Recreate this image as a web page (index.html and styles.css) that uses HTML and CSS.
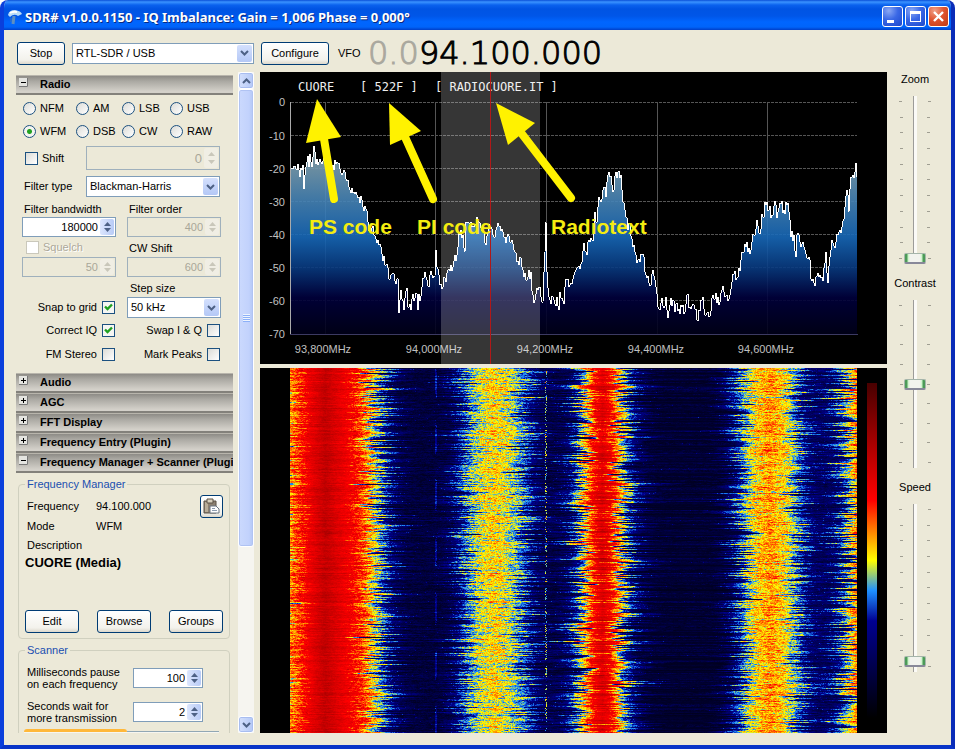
FILE: index.html
```html
<!DOCTYPE html>
<html lang="en">
<head>
<meta charset="utf-8">
<title>SDR# v1.0.0.1150</title>
<link rel="stylesheet" href="styles.css">
</head>
<body>
<svg class="defs" aria-hidden="true">
  <symbol id="chev-down" viewBox="0 0 9 6"><path d="M1 1 L4.500 4.500 L8 1" fill="none" stroke="#4d6185" stroke-width="2"/></symbol>
  <symbol id="chev-up" viewBox="0 0 9 6"><path d="M1 5 L4.500 1.500 L8 5" fill="none" stroke="#4d6185" stroke-width="2"/></symbol>
  <symbol id="tri-up" viewBox="0 0 7 4"><path d="M0 4 L3.500 0 L7 4Z" fill="currentColor"/></symbol>
  <symbol id="tri-down" viewBox="0 0 7 4"><path d="M0 0 L3.500 4 L7 0Z" fill="currentColor"/></symbol>
  <symbol id="minus" viewBox="0 0 9 9"><path d="M0 0H9V9H0Z" fill="#e4e4e0"/><path d="M0 8.500H8.500V0" fill="none" stroke="#777"/><path d="M2 4.500H7" stroke="#000"/></symbol>
  <symbol id="plus" viewBox="0 0 9 9"><path d="M0 0H9V9H0Z" fill="#e4e4e0"/><path d="M0 8.500H8.500V0" fill="none" stroke="#777"/><path d="M2 4.500H7M4.500 2V7" stroke="#000"/></symbol>
</svg>
<div class="window">
  <header class="titlebar">
    <svg class="app-icon" viewBox="0 0 16 18"><path d="M1 7 Q2 2 8 2 Q14 3 15 6 L11 8 Q7 5 3 9Z" fill="#b9dcf7"/><path d="M3 5 Q6 3 10 4" stroke="#fff" stroke-width="2" fill="none"/><path d="M7 8 L6 16" stroke="#5f8fc0" stroke-width="3"/><path d="M4 10 L4 14" stroke="#3c74b4" stroke-width="1"/></svg>
    <h1>SDR# v1.0.0.1150 - IQ Imbalance: Gain = 1,006 Phase = 0,000°</h1>
    <button class="cap" aria-label="Minimize"><svg viewBox="0 0 19 19"><path d="M4 13H11V16H4Z" fill="#fff"/></svg></button>
    <button class="cap" aria-label="Maximize"><svg viewBox="0 0 19 19"><path d="M4 4H15V15H4Z M5 7V14H14V7Z" fill="#fff" fill-rule="evenodd"/></svg></button>
    <button class="cap close" aria-label="Close"><svg viewBox="0 0 19 19"><path d="M5 5L14 14M14 5L5 14" stroke="#fff" stroke-width="2.400"/></svg></button>
  </header>
  <div class="toolbar">
    <button class="btn stop">Stop</button>
    <span class="combo source"><select aria-label="Source"><option>RTL-SDR / USB</option></select><span class="drop"><svg><use href="#chev-down"/></svg></span></span>
    <button class="btn configure">Configure</button>
    <span class="vfo-label">VFO</span>
    <output class="vfo"><span>0.0</span>94.100.000</output>
  </div>
  <main class="content">
    <aside class="sidebar">
      <div class="panels">
        <h2 class="bar"><svg><use href="#minus"/></svg>Radio</h2>
        <div class="radio-panel">
          <div class="modes">
            <label><input type="radio" name="mode">NFM</label>
            <label><input type="radio" name="mode">AM</label>
            <label><input type="radio" name="mode">LSB</label>
            <label><input type="radio" name="mode">USB</label>
            <label><input type="radio" name="mode" checked>WFM</label>
            <label><input type="radio" name="mode">DSB</label>
            <label><input type="radio" name="mode">CW</label>
            <label><input type="radio" name="mode">RAW</label>
          </div>
          <div class="wide-row">
            <label class="check"><input type="checkbox">Shift</label>
            <span class="spin off tall"><input type="text" value="0" disabled aria-label="Shift amount"><span class="arrows"><svg><use href="#tri-up"/></svg><svg><use href="#tri-down"/></svg></span></span>
          </div>
          <div class="wide-row">
            <label for="ftype">Filter type</label>
            <span class="combo"><select id="ftype"><option>Blackman-Harris</option></select><span class="drop"><svg><use href="#chev-down"/></svg></span></span>
          </div>
          <div class="pair">
            <label class="cap-label" for="fbw">Filter bandwidth</label>
            <label class="cap-label" for="ford">Filter order</label>
            <span class="spin"><input id="fbw" type="text" value="180000"><span class="arrows"><svg><use href="#tri-up"/></svg><svg><use href="#tri-down"/></svg></span></span>
            <span class="spin off"><input id="ford" type="text" value="400" disabled><span class="arrows"><svg><use href="#tri-up"/></svg><svg><use href="#tri-down"/></svg></span></span>
            <label class="check squelch"><input type="checkbox" disabled>Squelch</label>
            <label class="cap-label cw" for="cws">CW Shift</label>
            <span class="spin off"><input type="text" value="50" disabled aria-label="Squelch level"><span class="arrows"><svg><use href="#tri-up"/></svg><svg><use href="#tri-down"/></svg></span></span>
            <span class="spin off"><input id="cws" type="text" value="600" disabled><span class="arrows"><svg><use href="#tri-up"/></svg><svg><use href="#tri-down"/></svg></span></span>
            <span></span>
            <label class="cap-label step" for="step">Step size</label>
            <label class="check end">Snap to grid<input type="checkbox" checked></label>
            <span class="combo"><select id="step"><option>50 kHz</option></select><span class="drop"><svg><use href="#chev-down"/></svg></span></span>
            <label class="check end line">Correct IQ<input type="checkbox" checked></label>
            <label class="check end line">Swap I &amp; Q<input type="checkbox"></label>
            <label class="check end line">FM Stereo<input type="checkbox"></label>
            <label class="check end line">Mark Peaks<input type="checkbox"></label>
          </div>
        </div>
        <h2 class="bar"><svg><use href="#plus"/></svg>Audio</h2>
        <h2 class="bar"><svg><use href="#plus"/></svg>AGC</h2>
        <h2 class="bar"><svg><use href="#plus"/></svg>FFT Display</h2>
        <h2 class="bar"><svg><use href="#plus"/></svg>Frequency Entry (Plugin)</h2>
        <h2 class="bar"><svg><use href="#minus"/></svg>Frequency Manager + Scanner (Plugin)</h2>
        <fieldset class="group manager">
          <legend>Frequency Manager</legend>
          <dl><dt>Frequency</dt><dd>94.100.000</dd><dt>Mode</dt><dd>WFM</dd><dt>Description</dt></dl>
          <button class="btn paste" aria-label="Paste frequency"><svg viewBox="0 0 17 17"><path d="M1 3H13V15H1Z" fill="#8c8070" stroke="#5d5347"/><path d="M2 4H5V14H2Z" fill="#b9ad98"/><path d="M4 1H10V5H4Z" fill="#d8d0bd" stroke="#5d5347"/><path d="M7 8H13L16 11V15H7Z" fill="#fff" stroke="#6b7480"/><path d="M9 10.500H12M9 12.500H14" stroke="#8d9cb0"/></svg></button>
          <p class="station">CUORE (Media)</p>
          <div class="actions"><button class="btn">Edit</button><button class="btn">Browse</button><button class="btn">Groups</button></div>
        </fieldset>
        <fieldset class="group scanner">
          <legend>Scanner</legend>
          <div class="scan-row"><label for="ms">Milliseconds pause<br>on each frequency</label><span class="spin"><input id="ms" type="text" value="100"><span class="arrows"><svg><use href="#tri-up"/></svg><svg><use href="#tri-down"/></svg></span></span></div>
          <div class="scan-row"><label for="sec">Seconds wait for<br>more transmission</label><span class="spin"><input id="sec" type="text" value="2"><span class="arrows"><svg><use href="#tri-up"/></svg><svg><use href="#tri-down"/></svg></span></span></div>
          <div class="scan-tabs"><button class="hot" aria-label="Scan"></button><button aria-label="Results"></button></div>
        </fieldset>
      </div>
      <div class="scrollbar">
        <button aria-label="Scroll up"><svg><use href="#chev-up"/></svg></button>
        <div class="rail"><div class="thumb"><i></i></div></div>
        <button aria-label="Scroll down"><svg><use href="#chev-down"/></svg></button>
      </div>
    </aside>
    <section class="plots">
      <svg class="spectrum" viewBox="0 0 627 292">
        <defs>
          <linearGradient id="fill" gradientUnits="userSpaceOnUse" x1="0" y1="80" x2="0" y2="262">
            <stop offset="0" stop-color="#8fa9b0"/><stop offset=".25" stop-color="#4a86b6"/><stop offset=".47" stop-color="#1768b8"/><stop offset=".64" stop-color="#08397f"/><stop offset=".8" stop-color="#00003c"/><stop offset="1" stop-color="#000018"/>
          </linearGradient>
        </defs>
        <path class="grid dashed" d="M31 30.500H597M31 63.500H597M31 96.500H597M31 129.500H597M31 162.500H597M31 195.500H597M31 228.500H597"/>
        <path class="grid" d="M65.500 30V262M175.500 30V262M286.500 30V262M397.500 30V262M507.500 30V262"/>
        <path id="area" fill="url(#fill)" fill-opacity=".9"/>
        <path id="trace"/>
        <path class="axis" d="M30.500 30V262.500"/><path class="base" d="M30 262.500H598"/>
        <g class="db"><text x="25" y="34">0</text><text x="25" y="68">-10</text><text x="25" y="101">-20</text><text x="25" y="134">-30</text><text x="25" y="167">-40</text><text x="25" y="200">-50</text><text x="25" y="233">-60</text><text x="25" y="266">-70</text></g>
        <g class="mhz"><text x="63" y="281">93,800MHz</text><text x="174" y="281">94,000MHz</text><text x="285" y="281">94,200MHz</text><text x="396" y="281">94,400MHz</text><text x="506" y="281">94,600MHz</text></g>
        <g class="rds"><text x="38" y="19">CUORE</text><text x="100" y="19">[ 522F ]</text><text x="175" y="19">[ RADIOCUORE.IT ]</text></g>
        <rect x="181" y="0" width="99" height="292" fill="#fff" fill-opacity=".21"/>
        <path d="M230.500 0V292" stroke="#b01818"/>
        <g class="notes"><text x="49" y="162">PS code</text><text x="157" y="162">PI code</text><text x="291" y="162">Radiotext</text></g>
        <g class="arrows-y"><path d="M57 27L46 71L81 65Z"/><path d="M64 67L74 127"/><path d="M129 31L130 73L161 59Z"/><path d="M145 65L173 127"/><path d="M236 31L248 73L275 51Z"/><path d="M262 62L311 126"/></g>
      </svg>
      <div class="waterfall"><canvas id="fall" width="567" height="365"></canvas><div class="legend"></div></div>
    </section>
    <section class="sliders">
      <div class="slider"><label for="zoom">Zoom</label><div class="track"><span class="ticks"><i></i><i></i><i></i><i></i><i></i><i></i><i></i><i></i><i></i><i></i><i></i></span><input id="zoom" type="range" min="0" max="100" value="0"></div></div>
      <div class="slider"><label for="contrast">Contrast</label><div class="track"><span class="ticks"><i></i><i></i><i></i><i></i><i></i><i></i><i></i><i></i><i></i></span><input id="contrast" type="range" min="0" max="100" value="50"></div></div>
      <div class="slider"><label for="speed">Speed</label><div class="track"><span class="ticks"><i></i><i></i><i></i><i></i><i></i><i></i><i></i><i></i><i></i><i></i><i></i></span><input id="speed" type="range" min="0" max="100" value="3"></div></div>
    </section>
  </main>
</div>
<script src="plots.js"></script>
</body>
</html>
```
FILE: styles.css
```css
* { box-sizing: border-box; }
body { margin: 0; background: #fff; font: 11px/13px "Liberation Sans", Arial, sans-serif; color: #000; }
button, input, select { font: inherit; color: inherit; margin: 0; padding: 0; }
.defs { position: absolute; width: 0; height: 0; }
.window { display: flex; flex-direction: column; height: 100vh; background: #ece9d8; border: solid #0046e0; border-width: 0 4px 4px; border-radius: 8px 8px 0 0; overflow: hidden; border-left-color: #0a3fdc; border-right-color: #0a2cb8; border-bottom-color: #0834c8; }

.titlebar { display: flex; align-items: center; gap: 2px; height: 30px; flex: none; margin: 0 -4px; padding: 3px 6px 0 7px; background: linear-gradient(#0a50d8 0, #3a93ff 2px, #0a62ee 5px, #0054e3 9px, #0056e8 16px, #0066ff 22px, #0064fa 27px, #003fc8 30px); }
.app-icon { width: 16px; height: 18px; }
.titlebar h1 { flex: 1; margin: 0; font: bold 13px/18px "Noto Sans", sans-serif; color: #fff; text-shadow: 1px 1px #0a2a80; white-space: nowrap; }
.cap { width: 21px; height: 21px; border: 1px solid #fff; border-radius: 3px; background: radial-gradient(circle at 30% 20%, #8aa8f4, #3a68e6 45%, #1c48cc); }
.cap svg { display: block; width: 19px; height: 19px; }
.cap.close { background: radial-gradient(circle at 30% 20%, #f0a088, #e05530 45%, #c03a14); }

.toolbar { display: flex; align-items: center; height: 42px; flex: none; padding: 4px 12px 0 13px; }
.btn { height: 23px; border: 1px solid #003c74; border-radius: 3px; background: linear-gradient(#fff, #f3f2ec 80%, #dcd8cc); text-align: center; }
.stop { width: 48px; margin-right: 7px; }
.configure { width: 68px; margin: 0 9px 0 7px; }
.vfo-label { width: 30px; }
.vfo { font: 200 32px/34px "DejaVu Sans", sans-serif; -webkit-text-stroke: 1px currentColor; }
.vfo span { color: #aaa89e; }

.combo { display: flex; height: 21px; border: 1px solid #7f9db9; background: #fff; }
.combo select { flex: 1; min-width: 0; appearance: none; border: 0; background: none; padding-left: 3px; outline: 0; }
.source { width: 182px; }
.drop { display: grid; place-items: center; width: 15px; margin: 1px; border-radius: 2px; background: linear-gradient(#d4e0fd, #b4c8f6); pointer-events: none; }
.drop svg, .scrollbar svg { width: 9px; height: 6px; display: block; }

.content { display: flex; flex: 1; min-height: 0; padding: 0 8px 12px 12px; }
.sidebar { display: flex; width: 238px; margin-right: 6px; flex: none; }
.panels { flex: 1; min-width: 0; overflow: hidden; padding: 3px 5px 0 0; }
.bar { display: flex; gap: 12px; height: 20px; margin: 0; padding: 0 0 0 3px; font: bold 11px/17px "Liberation Sans", Arial, sans-serif; white-space: nowrap; overflow: hidden; background: linear-gradient(#8d8b86, #aaa8a2 30%, #d3d0c9 90%); border-top: 1px solid #b8b5ac; border-bottom: 2px solid #83817b; }
.bar svg { width: 9px; height: 9px; margin-top: 2px; flex: none; }

.radio-panel { padding: 2px 12px 7px 6px; }
.modes { display: grid; grid-template-columns: 53px 46px 48px 1fr; grid-auto-rows: 23px; padding-left: 1px; }
.modes label, .check { display: flex; align-items: center; gap: 4px; white-space: nowrap; }
input[type=radio], input[type=checkbox] { appearance: none; flex: none; width: 13px; height: 13px; border: 1px solid #1c5180; background: linear-gradient(135deg, #dcdcd7, #fff); }
input[type=radio] { border-radius: 50%; }
input[type=radio]:checked { background: radial-gradient(circle, #21a121 0 2px, #f4f4f0 3px); }
input[type=checkbox]:checked { background: #f6f6f3 url("data:image/svg+xml,%3Csvg xmlns='http://www.w3.org/2000/svg' viewBox='0 0 11 11'%3E%3Cpath d='M2 4.500L4.500 7L9 2.500' fill='none' stroke='%2321a121' stroke-width='2.400'/%3E%3C/svg%3E"); }
input[type=checkbox]:disabled { border-color: #cac8bb; background: #fff; }
.wide-row { display: grid; grid-template-columns: 64px 134px; align-items: center; margin-bottom: 6px; }
.wide-row label { padding-left: 2px; }
.wide-row .check { padding-left: 3px; }
.wide-row:nth-child(2) { margin-top: 3px; }
.pair { display: grid; grid-template-columns: 94px 94px; column-gap: 11px; align-items: center; }
.cap-label { padding: 0 0 1px 2px; }
.spin { display: flex; height: 20px; border: 1px solid #7f9db9; background: #fff; }
.spin input { flex: 1; width: 0; min-width: 0; border: 0; background: none; text-align: right; outline: 0; }
.arrows { display: flex; flex-direction: column; justify-content: space-evenly; align-items: center; width: 14px; margin: 1px 1px 1px 2px; background: linear-gradient(90deg, #dce6fd, #b8cbf6); color: #4d6185; border-radius: 2px; }
.arrows svg { width: 7px; height: 4px; }
.spin.off { background: #ece9d8; border-color: #9fb0bc; color: #a9a799; }
.spin.off .arrows { background: #f0eee4; color: #c9c7ba; }
.tall { height: 24px; }
.tall input { font-size: 13px; }
.squelch { color: #aca899; height: 20px; padding-left: 4px; text-shadow: 1px 1px #fff; }
.cw { padding-top: 4px; }
.step { padding: 5px 0 2px 3px; }
.end { justify-content: flex-end; padding-right: 1px; gap: 5px; }
.line { height: 24px; }

.group { position: relative; min-width: 0; margin: 5px 3px 4px 2px; padding: 0 6px; border: 1px solid #d0d0bf; border-radius: 4px; }
.group legend { padding: 0 2px; color: #1a4fb0; }
.manager dl { display: grid; grid-template-columns: 69px 1fr; grid-auto-rows: 20px; margin: 5px 2px 0; height: 58px; line-height: 20px; }
.manager dt:last-child { line-height: 18px; }
.manager dd { margin: 0; }
.paste { position: absolute; right: 6px; top: 4px; width: 23px; height: 23px; display: grid; place-items: center; }
.paste svg { width: 17px; height: 17px; }
.station { margin: 0; font: bold 13px/18px "Liberation Sans", Arial, sans-serif; }
.actions { display: flex; justify-content: space-between; margin: 38px 0 5px; }
.actions .btn { width: 54px; }
.scanner { height: 120px; }
.scan-row { display: flex; justify-content: space-between; align-items: center; height: 34px; padding: 0 20px 0 2px; line-height: 12px; }
.scan-row:nth-of-type(1) { margin-top: 4px; }
.scan-row .spin { width: 70px; }
.scan-tabs { display: flex; margin: 0 4px 0 -1px; }
.scan-tabs button { flex: 9; height: 20px; margin-top: 2px; border: 0; border-top: 1px solid #91a7b4; background: #f7f6f0; }
.scan-tabs .hot { flex: 10; margin-top: 0; border-top: 3px solid #ffb83a; border-radius: 3px 3px 0 0; }

.scrollbar { display: flex; flex-direction: column; width: 16px; background: #f6f5f0; }
.scrollbar button { display: grid; place-items: center; height: 17px; border: 1px solid #fff; border-radius: 3px; background: linear-gradient(90deg, #d4e0fd, #b4c8f6); box-shadow: inset 0 0 0 1px #a8bdf0; }
.rail { flex: 1; }
.thumb { display: grid; place-items: center; height: 73%; border: 1px solid #fff; border-radius: 3px; background: linear-gradient(90deg, #cbd9fd, #c2d2fc 70%, #b4c8f6); box-shadow: inset 0 0 0 1px #b0c3f3; }
.thumb i { width: 7px; height: 8px; background: repeating-linear-gradient(#eef4fe 0 1px, #8cb0f8 1px 2px); }

.plots { display: flex; flex-direction: column; flex: 1; min-width: 0; gap: 4px; }
.spectrum { display: block; width: 100%; background: #000; flex: none; font: 11px "Liberation Sans", Arial, sans-serif; }
.grid { stroke: #555; fill: none; }
.dashed { stroke-dasharray: 3 1; }
.axis { stroke: #aaa; }
.base { stroke: #3c3a62; }
#trace { fill: none; stroke: #fff; stroke-linejoin: round; shape-rendering: crispEdges; }
.db { fill: #c0c0c0; text-anchor: end; }
.mhz { fill: #c0c0c0; text-anchor: middle; }
.rds { fill: #eee; font: 12px "DejaVu Sans Mono", monospace; white-space: pre; }
.notes { fill: #f4ec10; font: bold 21px "Liberation Sans", Arial, sans-serif; }
.arrows-y { fill: #fff200; stroke: #fff200; stroke-width: 8; stroke-linecap: round; }
.arrows-y path:nth-child(odd) { stroke: none; }
.waterfall { flex: 1; min-height: 0; display: flex; background: #000; padding-left: 30px; }
.waterfall canvas { flex: 1; min-width: 0; height: 100%; image-rendering: pixelated; }
.legend { width: 10px; margin: 15px 10px; background: linear-gradient(#480000, #f00 35%, #ff0 53%, #1e90ff 62%, #000091 71%, #000 100%); }

.sliders { width: 56px; flex: none; }
.slider { display: flex; flex-direction: column; align-items: center; height: 204px; }
.slider label { line-height: 14px; margin-bottom: 10px; }
.track { position: relative; width: 32px; height: 168px; }
.ticks { position: absolute; inset: 5px 0; display: flex; flex-direction: column; justify-content: space-between; }
.ticks i { height: 1px; margin: 0 1px; background: linear-gradient(90deg, #a09e92 3px, transparent 3px calc(100% - 3px), #a09e92 calc(100% - 3px)); }
.ticks i:first-child, .ticks i:last-child { margin: 0; }
.track input { position: absolute; inset: 0; width: 32px; height: 168px; appearance: none; background: linear-gradient(90deg, #9d9c99 1px, #fbfaf6 1px) center / 4px 100% no-repeat; writing-mode: vertical-lr; direction: rtl; }
.track input::-webkit-slider-thumb { appearance: none; width: 22px; height: 11px; border: 1px solid #a5b5aa; border-bottom: 2px solid #889; border-radius: 2px; background: linear-gradient(90deg, #4c9a58 2px, #c8f4c4 3px, #f2f3ee 5px 15px, #c8f4c4 17px, #4c9a58 18px); }
```
FILE: plots.js
```js
// Deterministic noise source, so that every load draws the same signal.
let seed = 1150;
function rnd() {
  seed = (seed * 1664525 + 1013904223) >>> 0;
  return seed / 4294967296;
}

// Spectrum trace, x,y pairs in the plot's own coordinates.
const pts = `30,92 33,97 36,97 38,92 40,105 42,98 43,93 44,117 46,95 48,84 49,95 50,82 52,95 54,74 56,92 58,93 60,87 62,92 64,85 68,95 72,98 76,92 78,91 80,97 83,101 86,107 89,115 92,116 94,120 96,120 98,126 100,131 102,128 104,139 106,137 108,150 110,160 112,156 115,164 118,168 120,172 122,182 124,184 126,193 128,196 129,207 131,203 134,202 136,212 138,206 139,241 141,218 142,227 144,238 145,226 147,216 148,235 150,232 151,238 152,227 155,226 157,222 158,238 159,222 161,224 163,206 165,200 167,208 169,215 171,199 173,206 175,204 176,178 177,195 179,203 181,212 186,210 188,198 190,199 193,195 197,183 199,160 201,158 203,163 205,180 206,150 209,151 212,155 215,152 217,145 219,150 221,156 224,160 226,173 229,152 230,155 233,163 236,158 239,154 243,160 246,171 248,162 252,168 254,178 257,190 260,185 263,198 266,208 268,205 271,200 272,219 274,231 276,222 278,218 280,215 281,225 283,230 284,200 286,150 287,200 289,225 291,232 293,225 295,232 297,225 299,238 300,220 302,226 304,232 305,215 307,208 310,213 315,200 320,197 322,190 324,171 326,180 330,170 333,169 335,140 337,150 339,125 341,130 343,118 345,115 346,125 348,103 350,105 352,113 354,118 356,100 357,106 359,99 361,103 363,130 366,145 368,158 370,152 373,175 376,183 378,188 380,190 383,182 385,200 387,206 390,214 393,198 395,208 397,222 398,235 400,238 402,226 404,236 406,225 408,246 410,233 413,228 415,240 417,231 419,237 422,235 425,240 427,223 430,235 433,232 436,237 438,249 441,228 443,225 445,243 448,240 450,244 452,226 455,227 458,225 460,230 463,214 465,225 469,227 472,210 474,202 477,206 480,199 482,180 485,172 487,170 490,182 492,170 495,163 497,148 500,162 502,142 504,145 505,130 507,130 509,138 512,143 515,129 517,146 520,131 524,138 527,133 529,140 531,165 534,163 536,185 537,163 540,170 544,175 547,186 550,188 551,207 554,211 557,204 560,203 563,209 566,180 568,211 570,185 572,168 575,176 578,163 582,155 585,135 587,118 589,140 591,105 593,103 595,100 596,91 597,105`
  .split(" ").map(p => p.split(",").map(Number));
const line = [];
pts.forEach((p, i) => {
  line.push(p.join(" "));
  const q = pts[i + 1];
  if (!q) return;
  for (let x = p[0] + 1; x < q[0]; x++) {
    const y = p[1] + (q[1] - p[1]) * (x - p[0]) / (q[0] - p[0]);
    line.push(x + " " + Math.round(y + (rnd() - 0.5) * 12));
  }
});
const d = "M" + line.join("L");
document.getElementById("trace").setAttribute("d", d);
document.getElementById("area").setAttribute("d", d + "L597 262L30 262Z");

// Colour map, signal level to RGB.
const map = [[0, 0, 0, 0], [0.12, 0, 0, 40], [0.29, 0, 0, 145], [0.385, 30, 144, 255], [0.47, 255, 255, 0], [0.65, 255, 0, 0], [1, 72, 0, 0]];
function lerp(table, v) {
  let i = 1;
  while (i < table.length - 1 && table[i][0] < v) i++;
  const a = table[i - 1], b = table[i];
  const t = Math.max(0, Math.min(1, (v - a[0]) / (b[0] - a[0])));
  return a.slice(1).map((c, k) => c + (b[k + 1] - c) * t);
}
// Stations: centre, levels by distance to the left and right,
// j = how far a line stretches, a = how much a line's level varies.
const stations = [
  { c: 35, l: [[0, 0.77], [12, 0.71], [22, 0.65], [36, 0.56], [50, 0.4]], r: [[0, 0.77], [14, 0.71], [38, 0.62], [48, 0.48], [58, 0.36], [70, 0.22], [90, 0.12]], j: 0.34, a: 0.02 },
  { c: 203, l: [[0, 0.5], [14, 0.46], [26, 0.38], [40, 0.22], [55, 0.12]], r: [[0, 0.5], [16, 0.46], [30, 0.37], [44, 0.22], [62, 0.13]], j: 0.5, a: 0.05 },
  { c: 312, l: [[0, 0.72], [10, 0.65], [19, 0.48], [27, 0.32], [42, 0.18], [60, 0.1]], r: [[0, 0.72], [10, 0.65], [18, 0.48], [26, 0.32], [42, 0.16], [60, 0.08]], j: 0.65, a: 0.08 },
  { c: 480, l: [[0, 0.55], [15, 0.5], [25, 0.42], [36, 0.28], [50, 0.14], [65, 0.08]], r: [[0, 0.55], [14, 0.5], [26, 0.4], [38, 0.27], [54, 0.15], [70, 0.1]], j: 0.5, a: 0.05 },
  { c: 578, l: [[0, 0.68], [10, 0.59], [18, 0.46], [28, 0.32], [44, 0.18], [60, 0.1]], r: [[0, 0.66], [9, 0.6]], j: 0.8, a: 0.06 }
];
const cv = document.getElementById("fall");
const ctx = cv.getContext("2d");
const W = cv.width, H = cv.height;
const img = ctx.createImageData(W, H);
const slow = stations.map(() => [0, 0]);
for (let y = 0; y < H; y++) {
  const sc = stations.map((s, k) => [0, 1].map(side => {
    slow[k][side] = slow[k][side] * 0.8 + (rnd() - 0.5) * 0.4;
    let n = slow[k][side] * 0.6 + (rnd() + rnd() - 1) * 0.9;
    if (rnd() < 0.06) n -= 0.6;
    return Math.max(0.3, 1 + s.j * n);
  }));
  const amp = stations.map(s => (rnd() + rnd() - 1) * s.a - (rnd() < 0.05 ? s.a : 0));
  const row = (rnd() - 0.5) * 0.04;
  let h = 0;
  for (let x = 0; x < W; x++) {
    let v = x < 290 && x > 100 ? 0.15 : x > 510 ? 0.19 : 0.09;
    stations.forEach((s, k) => {
      const dx = x - s.c, side = dx < 0 ? 0 : 1;
      const p = lerp(side ? s.r : s.l, Math.abs(dx) / sc[k][side])[0] + amp[k];
      if (p > v) v = p;
    });
    h = h * 0.55 + (rnd() - 0.5);
    v += row + h * (v > 0.66 ? 0.04 : v > 0.26 ? 0.12 : v > 0.14 ? 0.05 : 0.02);
    if ((x === 145 || x === 146) && Math.sin(y / 9) + rnd() > 0.6) v += 0.13;
    if ((x === 256 || x === 255) && rnd() < 0.3) v += 0.25;
    if (v < 0.25 && v > 0.17 && rnd() < 0.03) v += 0.1;
    const c = lerp(map, Math.max(0, v));
    const o = (y * W + x) * 4;
    img.data[o] = c[0]; img.data[o + 1] = c[1]; img.data[o + 2] = c[2]; img.data[o + 3] = 255;
  }
}
ctx.putImageData(img, 0, 0);
```
